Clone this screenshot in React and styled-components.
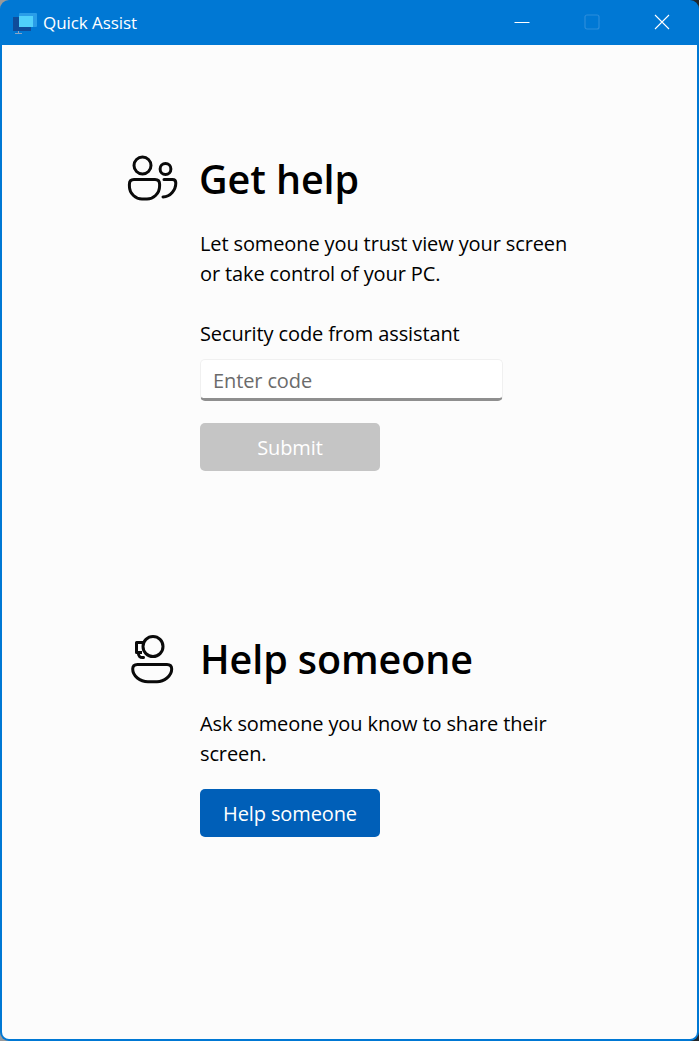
import React from 'react';
import styled, { createGlobalStyle } from 'styled-components';

const GlobalStyle = createGlobalStyle`
  html, body {
    margin: 0;
    padding: 0;
    background: #8f8f8f;
  }
  body {
    font-family: 'Open Sans', 'Noto Sans', 'Liberation Sans', sans-serif;
  }
`;

const Desktop = styled.div`
  width: 699px;
  height: 1041px;
  overflow: hidden;
  background: linear-gradient(90deg, #9a9a9a, #20262b);
`;

const Window = styled.div`
  box-sizing: border-box;
  width: 699px;
  height: 1041px;
  display: flex;
  flex-direction: column;
  background: #0078d4;
  border-radius: 9px;
  overflow: hidden;
`;

const TitleBar = styled.header`
  box-sizing: border-box;
  height: 45px;
  flex: none;
  display: flex;
  align-items: center;
  padding: 0 2px 1px 13px;
  color: #fff;
`;

const AppLogo = styled.svg`
  margin-top: 4px;
`;

const AppTitle = styled.span`
  margin-left: 6px;
  font-size: 17px;
  letter-spacing: -0.07px;
  color: #fff;
`;

const WindowControls = styled.div`
  margin-left: auto;
  display: flex;
  height: 100%;
`;

const ControlButton = styled.div`
  width: 70px;
  height: 100%;
  display: flex;
  align-items: center;
  justify-content: center;
`;

const Body = styled.main`
  flex: 1;
  margin: 0 2px 2px;
  background: #fcfcfc;
  border-radius: 0 0 7px 7px;
  padding: 102px 0 0 125px;
  display: flex;
  flex-direction: column;
  color: #000;
`;

const Section = styled.section`
  display: grid;
  grid-template-columns: 73px 1fr;
  height: ${(p) => p.$height}px;
`;

const IconCell = styled.div`
  padding-top: ${(p) => p.$top}px;
`;

const Heading = styled.h1`
  margin: 0 0 ${(p) => p.$gap}px ${(p) => p.$shift}px;
  font-size: 39.5px;
  line-height: 64px;
  font-weight: 600;
  letter-spacing: -0.1px;
`;

const Text = styled.p`
  margin: 0;
  width: 385px;
  font-size: 20px;
  line-height: 29.5px;
  letter-spacing: -0.12px;
`;

const Label = styled.label`
  display: block;
  margin-top: 31px;
  font-size: 20px;
  line-height: 30px;
  letter-spacing: -0.12px;
`;

const CodeInput = styled.input`
  box-sizing: border-box;
  display: block;
  width: 303px;
  height: 42px;
  margin-top: 10px;
  padding: 2px 12px 0;
  background: #fff;
  border: 1px solid #f0f0f0;
  border-bottom: 3px solid #8f8f8f;
  border-radius: 5px;
  outline: none;
  font-family: inherit;
  font-size: 20px;
  letter-spacing: -0.12px;

  &::placeholder {
    color: #6b6b6b;
    opacity: 1;
  }
`;

const ActionButton = styled.button`
  display: block;
  width: 180px;
  height: 48px;
  margin-top: ${(p) => p.$top}px;
  padding: 0;
  border: none;
  border-radius: 5px;
  background: ${(p) => (p.disabled ? '#c5c5c5' : '#005fb8')};
  color: #fff;
  font-family: inherit;
  font-size: 20px;
  letter-spacing: -0.12px;
`;

const AppIcon = () => (
  <AppLogo width="24" height="22" viewBox="0 0 24 22">
    <rect x="0" y="4" width="18" height="14" fill="#0f4c9a" />
    <rect x="5" y="18" width="1" height="2" fill="#8aa4c4" />
    <rect x="2" y="20" width="7" height="1" fill="#8aa4c4" />
    <rect x="6" y="0" width="18" height="14" rx="1" fill="#2a9de8" />
    <rect x="6" y="3" width="14" height="11" fill="#50d0fb" />
  </AppLogo>
);

const MinimizeIcon = () => (
  <svg width="16" height="16" viewBox="0 0 16 16">
    <path d="M0.5 8.5H15.5" stroke="#fff" strokeWidth="1" fill="none" />
  </svg>
);

const MaximizeIcon = () => (
  <svg width="16" height="16" viewBox="0 0 16 16">
    <rect x="1" y="1" width="14" height="14" rx="2" stroke="#2b8ddb" strokeWidth="1.2" fill="none" />
  </svg>
);

const CloseIcon = () => (
  <svg width="16" height="16" viewBox="0 0 16 16">
    <path d="M1 1L15 15M15 1L1 15" stroke="#fff" strokeWidth="1.1" fill="none" />
  </svg>
);

const PeopleIcon = () => (
  <svg width="52" height="48" viewBox="0 0 52 48" fill="none" stroke="#0a0a0a" strokeWidth="3">
    <circle cx="15.5" cy="10.5" r="8.5" />
    <circle cx="38.5" cy="14" r="5.4" />
    <path d="M7 24.5H28Q32.6 24.5 32.6 29V31C32.6 39 26 44 20 44H15C9 44 2.4 39 2.4 31V29Q2.4 24.5 7 24.5Z" strokeLinejoin="round" />
    <path d="M37 24.5H45.5Q48.8 24.5 48.8 28C48.8 35 43.5 41.5 36 42" strokeLinecap="round" />
  </svg>
);

const AgentIcon = () => (
  <svg width="50" height="52" viewBox="0 0 50 52" fill="none" stroke="#0a0a0a" strokeWidth="3">
    <circle cx="26" cy="12.5" r="10" />
    <path d="M17 8.5H9.5V18.5H15" strokeLinejoin="round" />
    <path d="M11.5 18.5C11 22 13 24 16.5 23.5" strokeLinecap="round" />
    <path d="M10.5 30.5H40Q44.7 30.5 44.7 35C44.7 42 37 47.7 30 47.7H21C13 47.7 5.7 42 5.7 35Q5.7 30.5 10.5 30.5Z" strokeLinejoin="round" />
  </svg>
);

const App = () => (
  <Desktop>
    <GlobalStyle />
    <Window>
      <TitleBar>
        <AppIcon />
        <AppTitle>Quick Assist</AppTitle>
        <WindowControls>
          <ControlButton><MinimizeIcon /></ControlButton>
          <ControlButton><MaximizeIcon /></ControlButton>
          <ControlButton><CloseIcon /></ControlButton>
        </WindowControls>
      </TitleBar>
      <Body>
        <Section $height={480}>
          <IconCell $top={8}><PeopleIcon /></IconCell>
          <div>
            <Heading $gap={18} $shift={-1}>Get help</Heading>
            <Text>Let someone you trust view your screen or take control of your PC.</Text>
            <Label htmlFor="code">Security code from assistant</Label>
            <CodeInput id="code" placeholder="Enter code" />
            <ActionButton type="button" disabled $top={22}>Submit</ActionButton>
          </div>
        </Section>
        <Section $height={300}>
          <IconCell $top={7}><AgentIcon /></IconCell>
          <div>
            <Heading $gap={18} $shift={0}>Help someone</Heading>
            <Text>Ask someone you know to share their screen.</Text>
            <ActionButton type="button" $top={21}>Help someone</ActionButton>
          </div>
        </Section>
      </Body>
    </Window>
  </Desktop>
);

export default App;
